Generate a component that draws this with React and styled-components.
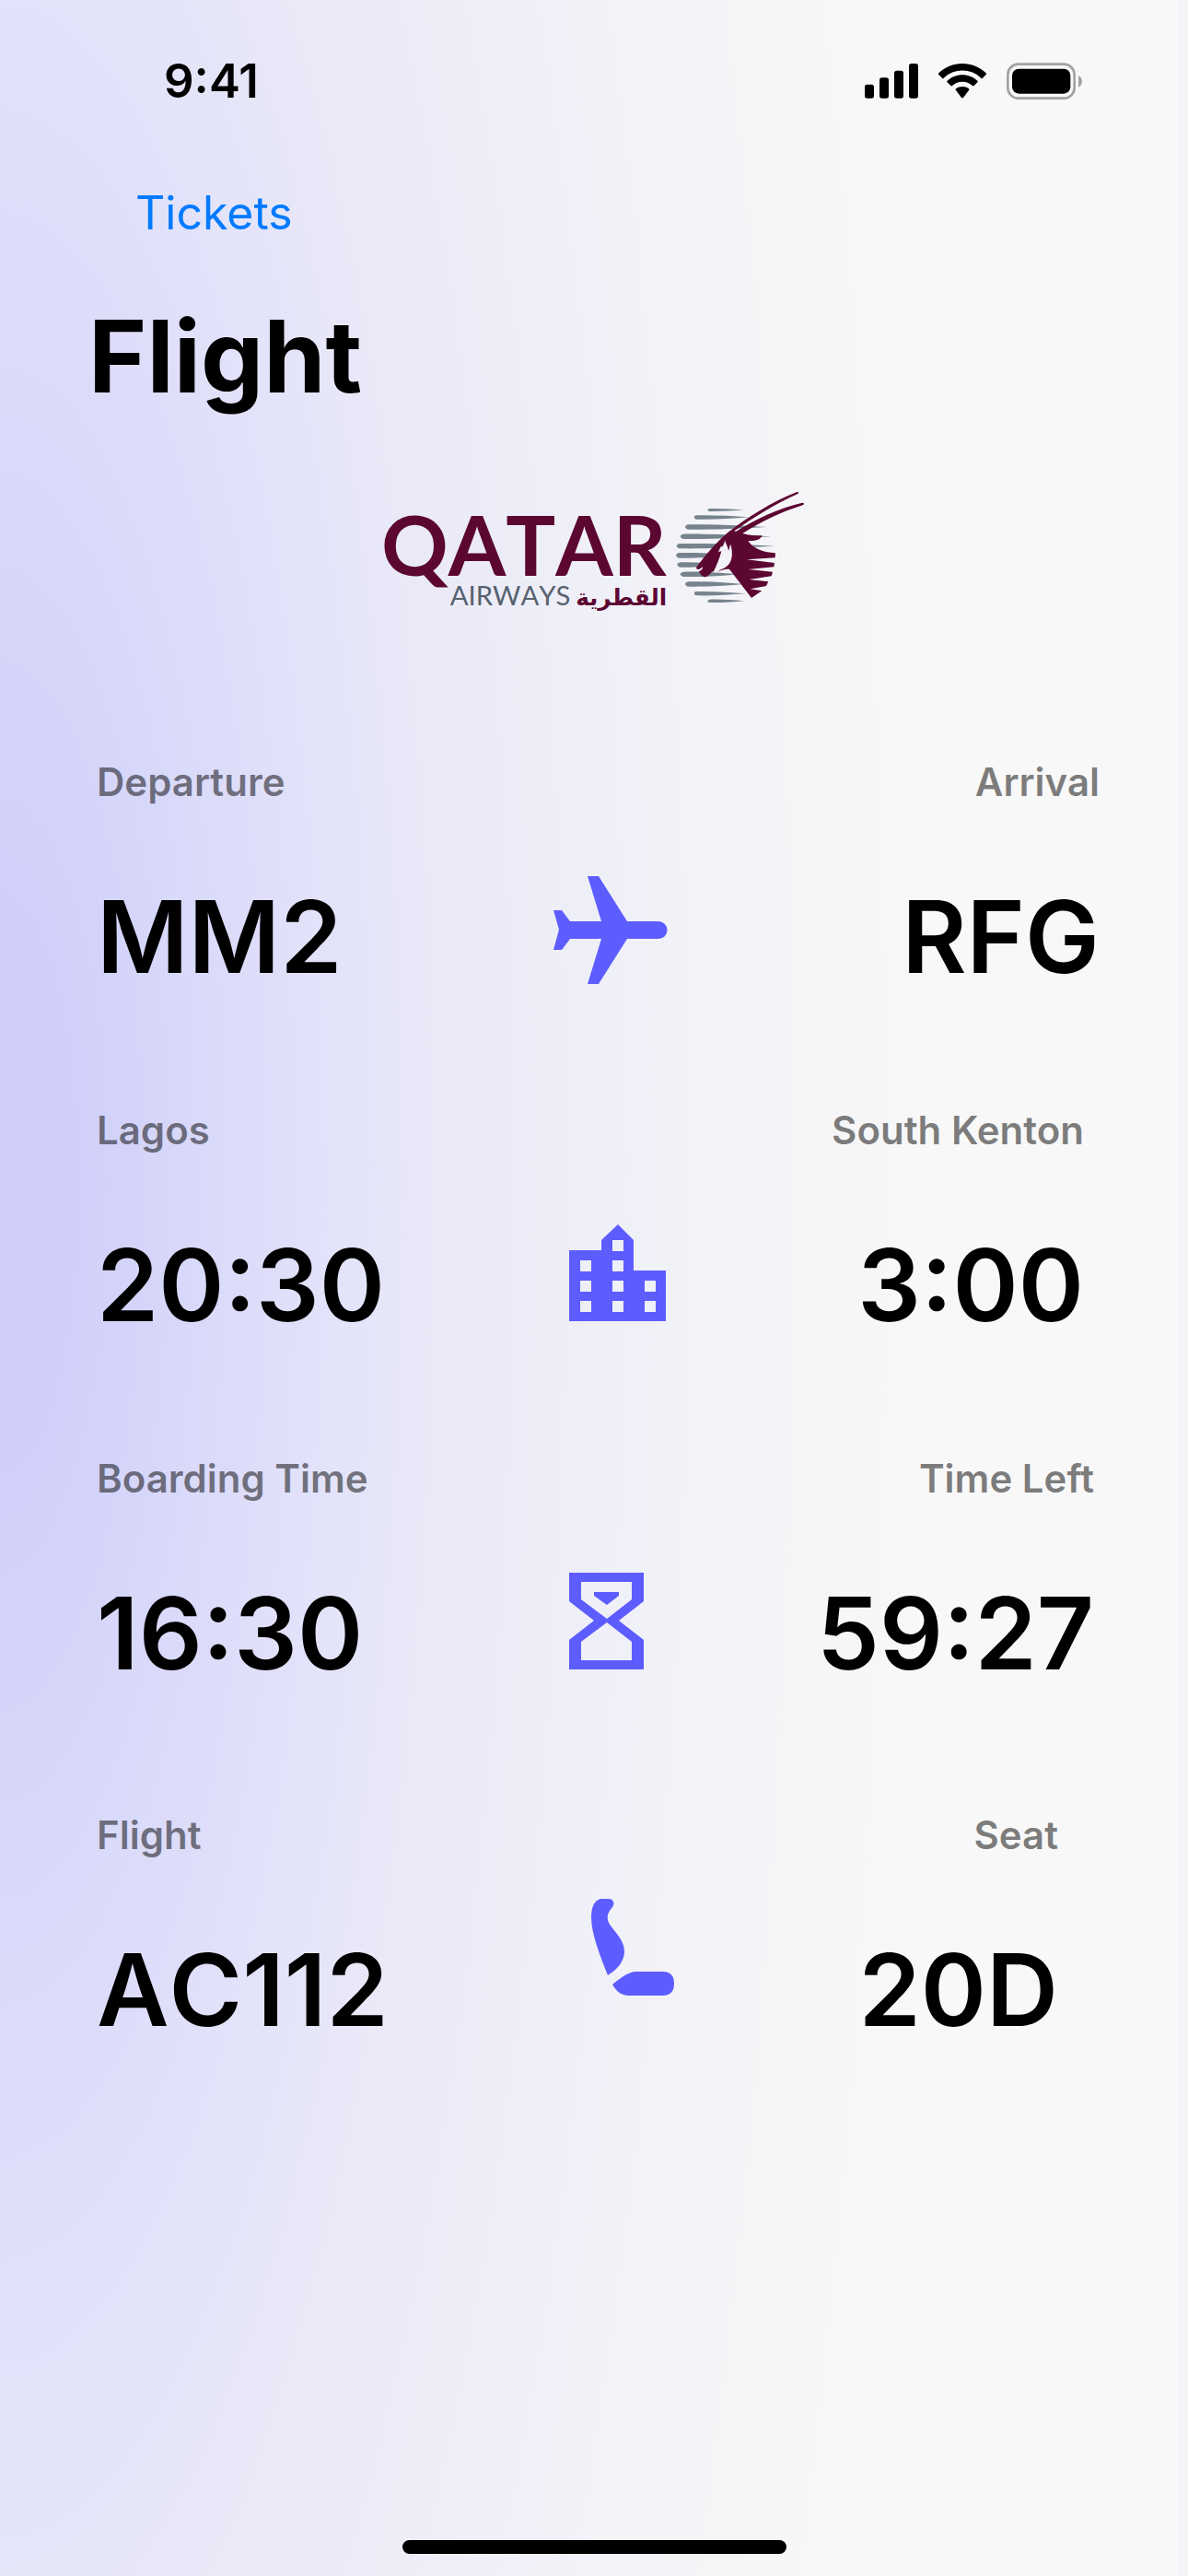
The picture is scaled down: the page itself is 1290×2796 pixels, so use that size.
import React from "react";
import styled, {createGlobalStyle} from "styled-components";

const rows = [
  {
    icon: "plane",
    inset: 0,
    left: {label: "Departure", value: "MM2"},
    right: {label: "Arrival", value: "RFG"},
  },
  {
    icon: "city",
    inset: 17,
    left: {label: "Lagos", value: "20:30"},
    right: {label: "South Kenton", value: "3:00"},
  },
  {
    icon: "hourglass",
    inset: 6,
    left: {label: "Boarding Time", value: "16:30"},
    right: {label: "Time Left", value: "59:27"},
  },
  {
    icon: "seat",
    inset: 45,
    left: {label: "Flight", value: "AC112"},
    right: {label: "Seat", value: "20D"},
  },
];

const icons = {
  plane: (
    <path d="M37 53h12l31 49h34a9 9 0 0 1 0 19H80l-31 49H37l15-49H18l-9 12H0l6-22-6-21h9l9 12h34z" />
  ),
  city: (
    <path
      fillRule="evenodd"
      d="M17 81h35V70l18-17 17 17v33h35v55H17z
      M64 70v12h12V70z M29 92v12h12V92z M64 92v12h12V92z
      M29 114v12h12v-12z M64 114v12h12v-12z M99 114v12h12v-12z
      M29 136v12h12v-12z M64 136v12h12v-12z M99 136v12h12v-12z"
    />
  ),
  hourglass: (
    <>
      <path
        fillRule="evenodd"
        d="M17 53h81v31L71 105l27 21v32H17v-32l27-21-27-21z
        M30 63v19l28 21 27-21V63z M30 148h55v-20L58 107l-28 21z"
      />
      <path d="M44 74h27v4L58 88 44 78z" />
    </>
  ),
  seat: (
    <>
      <path d="M53 20h7c5 0 7 5 4 9-4 5-6 8-5 14 2 9 18 19 18 34 0 11-8 20-18 26C51 83 41 58 41 40c0-12 4-20 12-20z" />
      <path d="M88 99h31c8 0 12 5 12 13s-4 13-12 13H82c-9 0-14-5-18-12 6-5 16-13 24-14z" />
    </>
  ),
};

const SignalIcon = () => (
  <svg width="58" height="38" viewBox="0 0 174 114" aria-hidden="true">
    <rect x="0" y="68" width="30" height="45" rx="8" />
    <rect x="48" y="46" width="30" height="67" rx="8" />
    <rect x="96" y="23" width="30" height="90" rx="8" />
    <rect x="144" y="0" width="30" height="113" rx="8" />
  </svg>
);

const WifiIcon = () => (
  <svg width="52" height="38" viewBox="0 0 156 114" aria-hidden="true">
    <path d="M78 0c30 0 57 12 77 31 2 2 2 3 0 5l-11 11c-2 2-3 2-5 0a88 88 0 0 0-122 0c-2 2-3 2-5 0L1 36c-2-2-2-3 0-5C21 12 48 0 78 0z" />
    <path d="M78 37c19 0 36 7 49 19 2 2 2 3 0 5l-11 11c-2 2-3 2-5 0a49 49 0 0 0-66 0c-2 2-3 2-5 0L29 61c-2-2-2-3 0-5 13-12 30-19 49-19z" />
    <path d="M78 75c8 0 15 2 21 7 2 2 2 3 0 5l-18 24c-2 2-4 2-6 0L57 87c-2-2-2-3 0-5 6-5 13-7 21-7z" />
  </svg>
);

const BatteryIcon = () => (
  <svg width="82" height="40" viewBox="0 0 246 120" aria-hidden="true">
    <rect
      x="4"
      y="5"
      width="217"
      height="111"
      rx="34"
      fill="none"
      stroke="#a3a3a4"
      strokeWidth="8"
    />
    <rect x="18" y="20" width="190" height="81" rx="22" />
    <path d="M234 42c8 4 12 11 12 19s-4 15-12 19z" fill="#a3a3a4" />
  </svg>
);

const AirlineLogo = () => (
  <LogoSvg viewBox="0 0 1470 480" role="img" aria-label="Qatar Airways">
    <LogoText x="42" y="314" $size={270} $weight={700}>
      QATAR
    </LogoText>
    <LogoText x="266" y="410" $size={88} $color="#56626e">
      AIRWAYS
    </LogoText>
    <ArabicText x="824" y="410" textAnchor="middle">
      القطرية
    </ArabicText>
    <g fill="#76838d">
      <path d="M1112 96c40-1 75 2 112 4-37 3-72 6-112 5-9-1-9-8 0-9z" />
      <path d="M1068 118c60-1 115 2 172 6-57 5-112 8-172 7-9-2-9-11 0-13z" />
      <path d="M1042 148c90-1 170 3 254 8-84 5-164 9-254 8-13-3-13-13 0-16z" />
      <path d="M1026 179c100-1 190 3 288 8-98 5-188 9-288 8-13-3-13-13 0-16z" />
      <path d="M1014 210c110-1 210 3 310 8-100 5-200 9-310 8-13-3-13-13 0-16z" />
      <path d="M1012 240c60-1 110 1 170 8-60 8-110 10-170 9-13-3-13-14 0-17z" />
      <path d="M1016 271c50-1 90 1 140 8-50 8-90 9-140 8-13-3-13-13 0-16z" />
      <path d="M1026 302c70-1 120 3 180 8-60 6-110 9-180 8-13-3-13-13 0-16z" />
      <path d="M1042 334c70-1 120 3 180 8-60 5-110 9-180 8-13-3-13-13 0-16z" />
      <path d="M1068 366c60-1 110 3 162 7-52 4-102 7-162 6-9-2-9-11 0-13z" />
      <path d="M1112 392c40-1 75 2 112 5-37 4-72 6-112 5-9-1-9-8 0-10z" />
    </g>
    <g transform="translate(990 24)">
      <path
        fill="#5c0632"
        d="M406 18C324 50 244 101 180 151C138 187 106 226 78 264C78 271 90 273 97 262
        C101 266 98 272 87 277C93 291 102 296 112 294C126 284 132 272 136 279
        L152 276C162 270 174 269 186 269L258 363L292 340L254 334L306 324L313 310
        L250 303L323 292L327 278L248 270L331 262L333 249L243 238L335 232L336 217
        C300 214 265 205 247 177C272 178 286 174 293 160C270 160 250 160 229 153
        C290 115 355 83 425 61C431 58 429 52 424 53C345 72 272 105 207 147
        L202 145C268 99 335 57 409 24C413 21 411 17 406 18z"
      />
      <path
        fill="#f3f2f8"
        d="M171 174C173 185 182 196 183 209C187 203 186 194 190 188C199 220 196 250 172 264
        C165 269 159 270 151 275C146 280 140 280 134 278C144 258 154 236 160 211L150 213
        L158 196L163 196C168 188 171 182 171 174z"
      />
    </g>
  </LogoSvg>
);

const App = () => {
  return (
    <>
      <GlobalStyle />
      <Screen>
        <StatusBar>
          <span>9:41</span>
          <StatusIcons>
            <SignalIcon />
            <WifiIcon />
            <BatteryIcon />
          </StatusIcons>
        </StatusBar>
        <BackLink href="#tickets">Tickets</BackLink>
        <Title>Flight</Title>
        <AirlineLogo />
        <Details>
          {rows.map(({icon, inset, left, right}) => (
            <Row key={icon}>
              <Info>
                <Label>{left.label}</Label>
                <Value>{left.value}</Value>
              </Info>
              <RowIcon viewBox="0 0 140 184" aria-hidden="true">
                {icons[icon]}
              </RowIcon>
              <Info $end $inset={inset}>
                <Label>{right.label}</Label>
                <Value>{right.value}</Value>
              </Info>
            </Row>
          ))}
        </Details>
        <HomeIndicator />
      </Screen>
    </>
  );
};

const GlobalStyle = createGlobalStyle`
  * {
    box-sizing: border-box;
  }
  body {
    margin: 0;
    font-family: Inter, sans-serif;
    color: #000;
  }
`;

const Screen = styled.main`
  display: flex;
  flex-direction: column;
  min-height: 100vh;
  padding: 57px 0 24px;
  background:
    linear-gradient(to left, rgba(93, 93, 255, 0.03) 10px, transparent 10px),
    radial-gradient(
      ellipse 1100px 4000px at 0 46%,
      #cfcffa 0%,
      #d0d0fa 8%,
      #d8d8fa 18%,
      #e2e2fa 32%,
      #e9e9f8 43%,
      #eeeef8 56%,
      #f4f4f8 74%,
      #f8f8f8 92%
    );
`;

const StatusBar = styled.header`
  display: flex;
  align-items: center;
  justify-content: space-between;
  padding: 0 115px 0 178px;
  font-size: 51px;
  font-weight: 600;
  line-height: 62px;
`;

const StatusIcons = styled.div`
  display: flex;
  align-items: center;
  gap: 22px;
`;

const BackLink = styled.a`
  align-self: flex-start;
  margin: 82px 0 0 147px;
  font-size: 50px;
  line-height: 60px;
  color: #007aff;
  text-decoration: none;
`;

const Title = styled.h1`
  margin: 61px 0 68px 96px;
  font-size: 108px;
  font-weight: 700;
  line-height: 130px;
`;

const LogoSvg = styled.svg`
  align-self: center;
  width: 490px;
  height: 160px;
`;

const LogoText = styled.text`
  font-family: Lato, sans-serif;
  font-size: ${({$size}) => $size}px;
  font-weight: ${({$weight}) => $weight || 400};
  font-kerning: none;
  fill: ${({$color}) => $color || "#5c0632"};
`;

const ArabicText = styled.text`
  font-family: "DejaVu Sans", sans-serif;
  font-size: 74px;
  font-weight: 700;
  fill: #5c0632;
`;

const Details = styled.section`
  display: flex;
  flex-direction: column;
  gap: 120px;
  padding: 144px 96px 0 105px;
`;

const Row = styled.div`
  display: grid;
  grid-template-columns: 23fr 140px 21fr;
  align-items: end;

  &:last-child {
    margin-top: 9px;
  }
`;

const Info = styled.div`
  display: flex;
  flex-direction: column;
  gap: 78px;
  align-items: ${({$end}) => ($end ? "flex-end" : "flex-start")};
  padding-right: ${({$inset}) => $inset || 0}px;
`;

const Label = styled.span`
  font-size: 42px;
  font-weight: 600;
  line-height: 50px;
  color: rgba(0, 0, 0, 0.5);
  white-space: nowrap;
`;

const Value = styled.span`
  font-size: 108px;
  font-weight: 600;
  font-kerning: none;
  line-height: 130px;
  white-space: nowrap;
`;

const RowIcon = styled.svg`
  width: 140px;
  height: 184px;
  fill: #5d5dff;
`;

const HomeIndicator = styled.div`
  align-self: center;
  width: 417px;
  height: 15px;
  margin-top: auto;
  border-radius: 8px;
  background: #000;
`;

export default App;
